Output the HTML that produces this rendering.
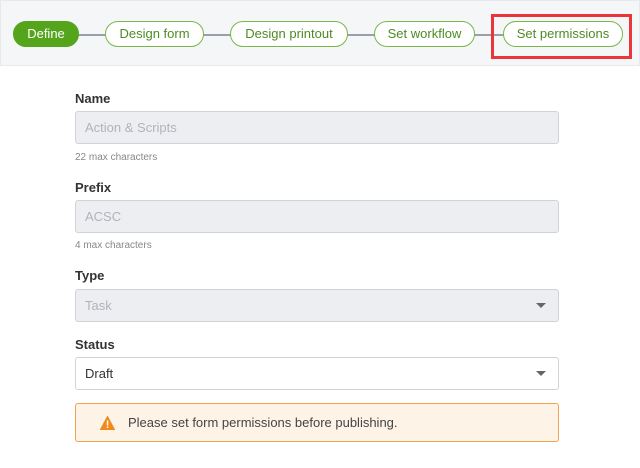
<!DOCTYPE html>
<html><head><style>
*{box-sizing:border-box;margin:0;padding:0}
body{width:640px;height:468px;background:#fff;font-family:"Liberation Sans",sans-serif;position:relative;overflow:hidden;color:#333}
.top{position:absolute;left:0;top:0;width:640px;height:66px;background:#f5f6f8;border:1px solid #e8e9ec}
.line{position:absolute;top:33px;height:2px;background:#9aa0a8}
.pill{position:absolute;top:20px;height:26px;border:1.5px solid #7ab648;border-radius:13px;background:#fff;color:#4e8a26;font-size:13px;line-height:23px;text-align:center}
.pill.on{background:#55a51c;border-color:#55a51c;color:#fff}
.red{position:absolute;left:491px;top:14px;width:141px;height:45px;border:3px solid #e8363a}
.lbl{position:absolute;left:75px;font-size:13px;font-weight:bold;color:#333}
.in{position:absolute;left:75px;width:484px;height:33px;border:1px solid #d0d3d8;border-radius:3px;background:#eceef1;font-size:13px;color:#b0b4ba;padding-left:9px;line-height:31px}
.in.w{background:#fff;color:#333}
.help{position:absolute;left:75px;font-size:10px;color:#888}
.car{position:absolute;right:12px;top:13px;width:0;height:0;border-left:5px solid transparent;border-right:5px solid transparent;border-top:5px solid #666}
.alert{position:absolute;left:75px;top:403px;width:484px;height:39px;border:1px solid #f3a34f;border-radius:3px;background:#fdf3e7;font-size:13px;color:#444;line-height:37px;padding-left:52px}
</style></head><body>
<div class="top">
<div class="line" style="left:77px;width:28px"></div>
<div class="line" style="left:202px;width:28px"></div>
<div class="line" style="left:346px;width:28px"></div>
<div class="line" style="left:473px;width:30px"></div>
<div class="pill on" style="left:12px;width:66px">Define</div>
<div class="pill" style="left:104px;width:99px">Design form</div>
<div class="pill" style="left:229px;width:118px">Design printout</div>
<div class="pill" style="left:373px;width:101px">Set workflow</div>
<div class="pill" style="left:502px;width:120px">Set permissions</div>
</div>
<div class="red"></div>
<div class="lbl" style="top:91px">Name</div>
<div class="in" style="top:111px">Action &amp; Scripts</div>
<div class="help" style="top:152px">22 max characters</div>
<div class="lbl" style="top:180px">Prefix</div>
<div class="in" style="top:200px">ACSC</div>
<div class="help" style="top:240px">4 max characters</div>
<div class="lbl" style="top:268px">Type</div>
<div class="in" style="top:289px">Task<div class="car"></div></div>
<div class="lbl" style="top:337px">Status</div>
<div class="in w" style="top:357px">Draft<div class="car"></div></div>
<div class="alert">Please set form permissions before publishing.
<svg style="position:absolute;left:24px;top:12px" width="15" height="14" viewBox="0 0 15 14"><path d="M7.5 0.5L14.5 13.5H0.5Z" fill="#f08a1c" stroke="#f08a1c" stroke-linejoin="round"/><rect x="6.8" y="4.5" width="1.5" height="5" fill="#fff"/><rect x="6.8" y="10.5" width="1.5" height="1.5" fill="#fff"/></svg>
</div>
</body></html>
